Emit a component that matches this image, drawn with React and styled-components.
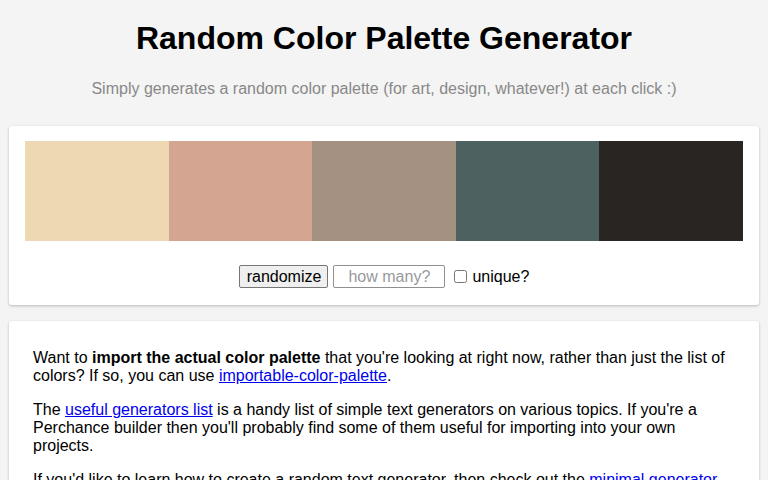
import React, { useState } from 'react';
import styled, { createGlobalStyle } from 'styled-components';

const GlobalStyle = createGlobalStyle`
  html, body {
    margin: 0;
    padding: 0;
    background: #f4f4f4;
    font-family: 'Liberation Sans', Arial, sans-serif;
    color: #000;
  }
`;

const Page = styled.div`
  padding: 0 9px;
`;

const Title = styled.h1`
  margin: 0;
  padding-top: 20px;
  font-size: 32px;
  line-height: 37px;
  font-weight: 700;
  text-align: center;
`;

const Subtitle = styled.p`
  margin: 23px 0 0;
  font-size: 16px;
  line-height: 18px;
  color: #888;
  text-align: center;
`;

const Card = styled.div`
  background: #fff;
  border-radius: 3px;
  box-shadow: 0 1px 3px rgba(0, 0, 0, 0.25);
  padding: ${p => p.$pad};
  margin-top: ${p => p.$top}px;
`;

const Strip = styled.div`
  display: flex;
  height: 100px;
`;

const Swatch = styled.div`
  flex: 1;
  background: ${p => p.$color};
`;

const Controls = styled.div`
  display: flex;
  justify-content: center;
  align-items: center;
  margin-top: 24px;
  gap: 5px;
  font-size: 16px;
`;

const Button = styled.button`
  font-family: 'Liberation Sans', Arial, sans-serif;
  font-size: 16px;
  height: 23px;
  padding: 0 6px 0 7px;
  background: #efefef;
  border: 1px solid #767676;
  border-radius: 2px;
  color: #000;
`;

const Count = styled.input`
  font-family: 'Liberation Sans', Arial, sans-serif;
  font-size: 16px;
  width: 112px;
  height: 23px;
  box-sizing: border-box;
  border: 1px solid #8f8f8f;
  border-radius: 2px;
  text-align: center;
  padding: 0;
  &::placeholder {
    color: #999;
  }
`;

const Label = styled.label`
  display: flex;
  align-items: center;
  margin-left: 4px;
  gap: 2px;
  input {
    margin: 0 3px 0 0;
    width: 13px;
    height: 13px;
  }
`;

const Para = styled.p`
  margin: 0 0 16px;
  font-size: 16px;
  line-height: 18px;
  a {
    color: #0000ee;
  }
`;

const colors = ['#edd8b3', '#d4a590', '#a59181', '#4d6260', '#282523'];

export default function App() {
  const [unique, setUnique] = useState(false);
  return (
    <Page>
      <GlobalStyle />
      <Title>Random Color Palette Generator</Title>
      <Subtitle>Simply generates a random color palette (for art, design, whatever!) at each click :)</Subtitle>
      <Card $pad="15px 16px 17px" $top={28}>
        <Strip>
          {colors.map(c => <Swatch key={c} $color={c} />)}
        </Strip>
        <Controls>
          <Button>randomize</Button>
          <Count placeholder="how many?" />
          <Label>
            <input type="checkbox" checked={unique} onChange={e => setUnique(e.target.checked)} />
            unique?
          </Label>
        </Controls>
      </Card>
      <Card $pad="28px 24px 8px" $top={16}>
        <Para>
          Want to <b>import the actual color palette</b> that you're looking at right now, rather than just the list of colors? If so, you can use <a href="#">importable-color-palette</a>.
        </Para>
        <Para>
          The <a href="#">useful generators list</a> is a handy list of simple text generators on various topics. If you're a Perchance builder then you'll probably find some of them useful for importing into your own projects.
        </Para>
        <Para>
          If you'd like to learn how to create a random text generator, then check out the <a href="#">minimal generator</a> tutorial.
        </Para>
      </Card>
    </Page>
  );
}
